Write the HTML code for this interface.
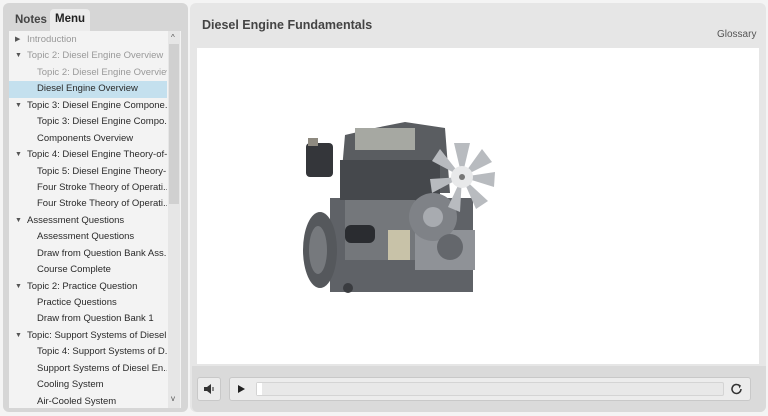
<!DOCTYPE html>
<html><head><meta charset="utf-8"><style>
*{margin:0;padding:0;box-sizing:border-box}
body{width:768px;height:416px;background:#f4f4f4;font-family:"Liberation Sans",sans-serif;position:relative;overflow:hidden}
#left{position:absolute;left:3px;top:3px;width:185px;height:409px;background:#d6d6d6;border-radius:6px}
.tab{position:absolute;top:10px;font-size:11.5px;font-weight:bold;color:#444;height:20px;line-height:20px}
#notes{left:15px}
#menu{left:50px;background:#ececec;padding:0 5px;border-radius:4px 4px 0 0;height:22px;top:9px;color:#222}
#list{position:absolute;left:9px;top:31px;width:172px;height:377px;background:#f3f3f3;overflow:hidden;padding-top:1px}
.row{height:16.45px;line-height:16.45px;font-size:9.5px;color:#2a2a2a;white-space:nowrap;position:relative;width:158px;overflow:hidden}
.row.l1{padding-left:18px}
.row.l2{padding-left:28px}
.row.g{color:#999}
.row.sel{background:#c4e0ee}
.tri{position:absolute;left:6px;font-size:7px;color:#555}
#sb{position:absolute;left:168px;top:31px;width:12px;height:377px;background:#e6e6e6}
#thumb{position:absolute;left:169px;top:44px;width:10px;height:160px;background:#d0d0d0}
.arr{position:absolute;left:171px;font-size:8px;color:#555}
#right{position:absolute;left:190px;top:3px;width:576px;height:409px;background:#e6e6e6;border-radius:6px}
#title{position:absolute;left:202px;top:18px;font-size:12.5px;font-weight:bold;color:#444}
#gloss{position:absolute;left:717px;top:29px;font-size:10px;color:#555}
#content{position:absolute;left:197px;top:48px;width:562px;height:316px;background:#fff}
#ctrl{position:absolute;left:192px;top:366px;width:574px;height:46px;background:#dadada;border-radius:0 0 6px 6px}
.btn{position:absolute;background:#ececec;border:1px solid #c8c8c8;border-radius:3px}
</style></head><body>
<div id="left">
</div>
<div class="tab" id="notes">Notes</div>
<div class="tab" id="menu">Menu</div>
<div id="list">
<div class="row l1 g"><span class="tri">▶</span>Introduction</div>
<div class="row l1 g"><span class="tri">▼</span>Topic 2: Diesel Engine Overview</div>
<div class="row l2 g">Topic 2: Diesel Engine Overview</div>
<div class="row l2 sel">Diesel Engine Overview</div>
<div class="row l1"><span class="tri">▼</span>Topic 3: Diesel Engine Compone...</div>
<div class="row l2">Topic 3: Diesel Engine Compo...</div>
<div class="row l2">Components Overview</div>
<div class="row l1"><span class="tri">▼</span>Topic 4: Diesel Engine Theory-of-...</div>
<div class="row l2">Topic 5: Diesel Engine Theory-...</div>
<div class="row l2">Four Stroke Theory of Operati...</div>
<div class="row l2">Four Stroke Theory of Operati...</div>
<div class="row l1"><span class="tri">▼</span>Assessment Questions</div>
<div class="row l2">Assessment Questions</div>
<div class="row l2">Draw from Question Bank Ass...</div>
<div class="row l2">Course Complete</div>
<div class="row l1"><span class="tri">▼</span>Topic 2: Practice Question</div>
<div class="row l2">Practice Questions</div>
<div class="row l2">Draw from Question Bank 1</div>
<div class="row l1"><span class="tri">▼</span>Topic: Support Systems of Diesel...</div>
<div class="row l2">Topic 4: Support Systems of D...</div>
<div class="row l2">Support Systems of Diesel En...</div>
<div class="row l2">Cooling System</div>
<div class="row l2">Air-Cooled System</div>
</div>
<div id="sb"></div><div id="thumb"></div>
<div class="arr" style="top:33px">^</div>
<div class="arr" style="top:394px">v</div>
<div id="right"></div>
<div id="title">Diesel Engine Fundamentals</div>
<div id="gloss">Glossary</div>
<div id="content">
<svg width="562" height="316" viewBox="197 48 562 316" style="position:absolute;left:0;top:0">
<rect x="330" y="198" width="143" height="94" fill="#5f6267"/>
<ellipse cx="320" cy="250" rx="17" ry="38" fill="#55585c"/>
<ellipse cx="318" cy="250" rx="9" ry="24" fill="#76797d"/>
<path d="M340 193 L345 135 L375 128 L405 122 L445 128 L450 193 Z" fill="#5a5d61"/>
<rect x="355" y="128" width="60" height="22" fill="#a6a8a2"/>
<rect x="340" y="160" width="100" height="40" fill="#45484c"/>
<rect x="306" y="143" width="27" height="34" rx="4" fill="#34363a"/>
<rect x="308" y="138" width="10" height="8" fill="#8e8a80"/>
<rect x="345" y="200" width="70" height="60" fill="#74777b"/>
<rect x="388" y="230" width="22" height="30" fill="#c8c2a8"/>
<rect x="345" y="225" width="30" height="18" rx="6" fill="#2a2c30"/>
<rect x="415" y="230" width="60" height="40" fill="#8f9297"/>
<circle cx="433" cy="217" r="24" fill="#7f8287"/>
<circle cx="433" cy="217" r="10" fill="#a8abb0"/>
<circle cx="450" cy="247" r="13" fill="#64676c"/>
<g fill="#b8bbbf" transform="translate(462 177)">
<path d="M0 0 L-8 -34 L8 -34 Z"/><path d="M0 0 L20 -28 L30 -15 Z"/>
<path d="M0 0 L33 -5 L32 10 Z"/><path d="M0 0 L26 24 L14 32 Z"/>
<path d="M0 0 L-2 35 L-14 30 Z"/><path d="M0 0 L-30 16 L-32 2 Z"/>
<path d="M0 0 L-30 -16 L-22 -28 Z"/>
<circle r="11" fill="#e8e9ea"/><circle r="3" fill="#777"/>
</g>
<circle cx="348" cy="288" r="5" fill="#3a3c40"/>
</svg>
</div>
<div id="ctrl"></div>
<div class="btn" style="left:197px;top:377px;width:24px;height:24px"><svg width="22" height="22"><path d="M6 9h3l4-3v10l-4-3H6z" fill="#333"/><rect x="14" y="9" width="2" height="4" fill="#888"/></svg></div>
<div class="btn" style="left:229px;top:377px;width:522px;height:24px"><svg width="20" height="22"><path d="M8 7l7 4-7 4z" fill="#222"/></svg></div>
<div style="position:absolute;left:256px;top:382px;width:468px;height:14px;background:#e8e8e8;border:1px solid #d4d4d4;border-radius:2px"><div style="width:5px;height:12px;background:#fff"></div></div>
<svg style="position:absolute;left:729px;top:381px" width="16" height="16"><path d="M12 8a4.5 4.5 0 1 1-1.5-3.4" fill="none" stroke="#333" stroke-width="1.5"/><path d="M9 3l3 1.5-1.5 3z" fill="#333"/></svg>
</body></html>
